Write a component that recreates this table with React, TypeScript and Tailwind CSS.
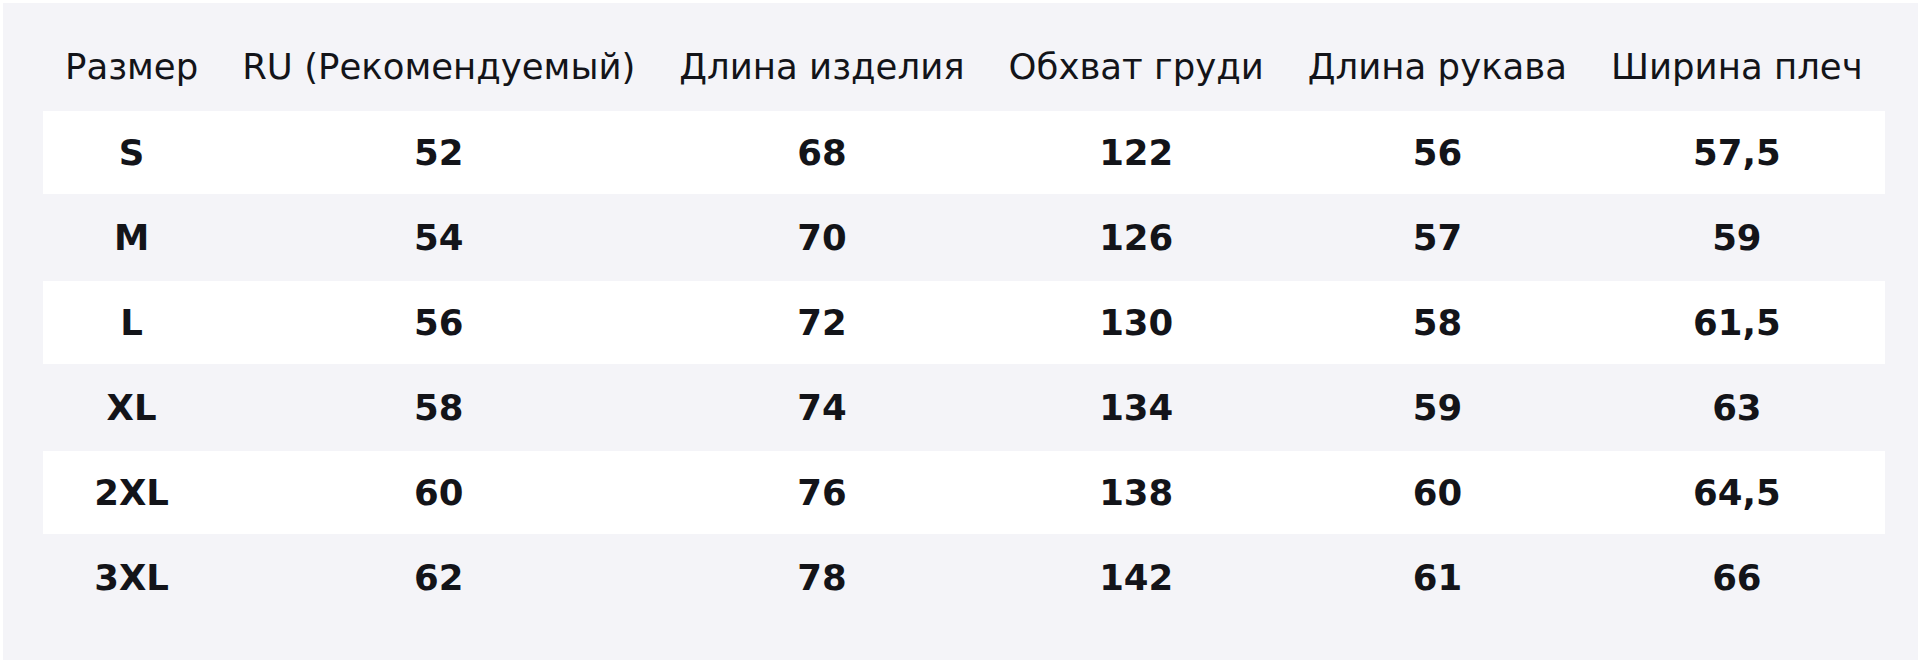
const headers = [
  "Размер",
  "RU (Рекомендуемый)",
  "Длина изделия",
  "Обхват груди",
  "Длина рукава",
  "Ширина плеч",
];

const rows = [
  ["S", "52", "68", "122", "56", "57,5"],
  ["M", "54", "70", "126", "57", "59"],
  ["L", "56", "72", "130", "58", "61,5"],
  ["XL", "58", "74", "134", "59", "63"],
  ["2XL", "60", "76", "138", "60", "64,5"],
  ["3XL", "62", "78", "142", "61", "66"],
];

export default function App() {
  return (
    <div className="w-[1926px] h-[663px] bg-white p-[3px]">
      <div
        className="w-[1915px] h-[657px] bg-[#f4f4f8] pt-[22px] pb-10 pl-10 text-[#131419]"
        style={{ fontFamily: '"DejaVu Sans", Verdana, sans-serif' }}
      >
        <table className="border-collapse text-[35.5px]">
          <thead>
            <tr className="h-[85px] border-b-2 border-[#f4f4f8]">
              {headers.map((h) => (
                <th key={h} className="px-[22px] font-normal text-center whitespace-nowrap">
                  {h}
                </th>
              ))}
            </tr>
          </thead>
          <tbody>
            {rows.map((r, i) => (
              <tr
                key={r[0]}
                className={`h-[85px] border-b-2 border-[#f4f4f8] ${
                  i % 2 === 0 ? "bg-white" : "bg-[#f4f4f8]"
                }`}
              >
                {r.map((c, j) => (
                  <td key={j} className="px-[22px] font-bold text-center whitespace-nowrap">
                    {c}
                  </td>
                ))}
              </tr>
            ))}
          </tbody>
        </table>
      </div>
    </div>
  );
}
